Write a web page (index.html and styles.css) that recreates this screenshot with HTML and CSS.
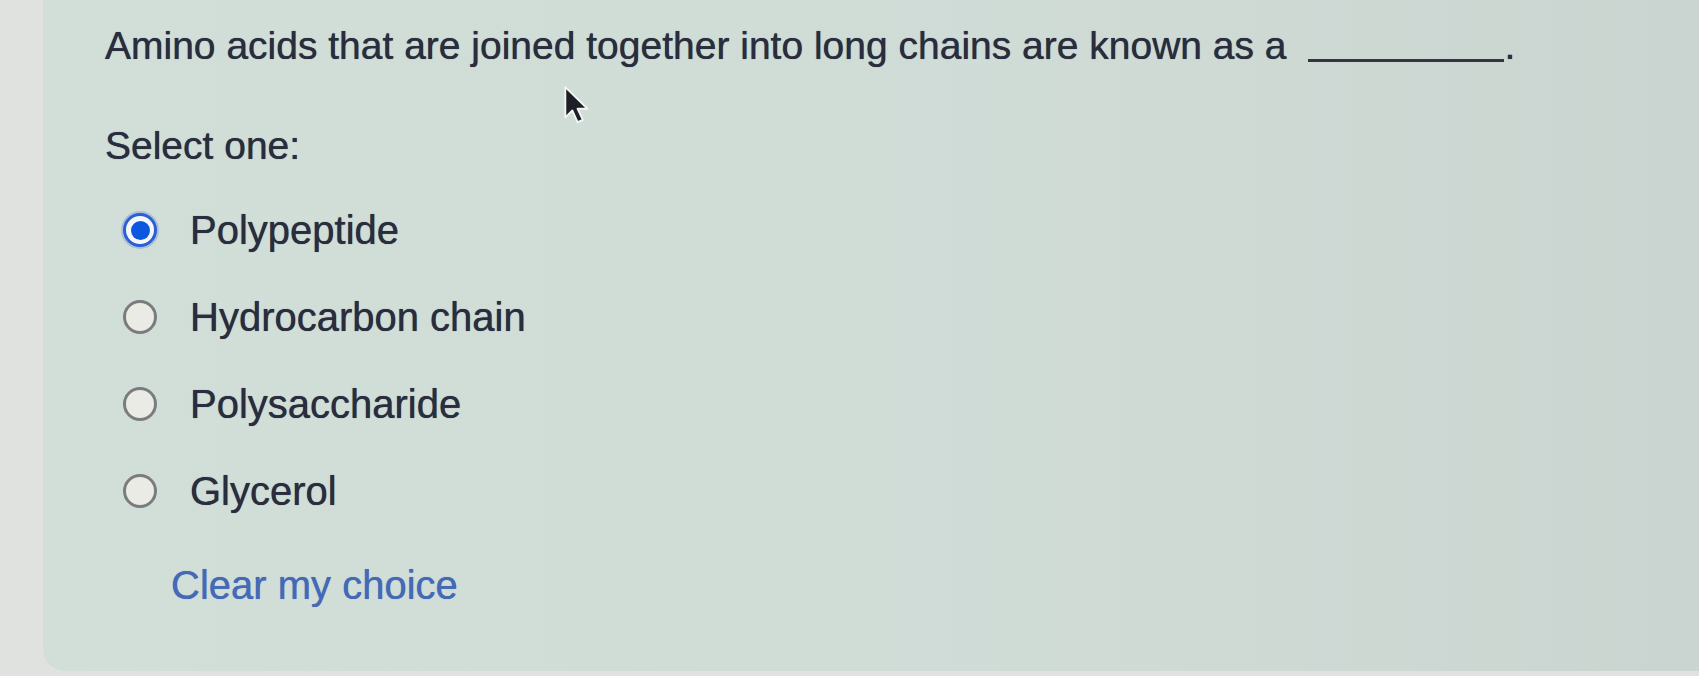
FILE: index.html
```html
<!DOCTYPE html>
<html>
<head>
<meta charset="utf-8">
<link rel="stylesheet" href="styles.css">
</head>
<body>
<div class="page">
  <div class="card">
    <p class="question">Amino acids that are joined together into long chains are known as a <span class="blank"></span>.</p>
    <p class="prompt">Select one:</p>
    <div class="options">
      <div class="option"><span class="radio checked"><span class="dot"></span></span><span class="label">Polypeptide</span></div>
      <div class="option"><span class="radio"></span><span class="label">Hydrocarbon chain</span></div>
      <div class="option"><span class="radio"></span><span class="label">Polysaccharide</span></div>
      <div class="option"><span class="radio"></span><span class="label">Glycerol</span></div>
    </div>
    <a class="clear" href="#">Clear my choice</a>
  </div>
  <svg class="cursor" width="30" height="42" viewBox="0 0 24 36">
    <path d="M2 1 L2 27 L8 21 L12.5 31 L17 29 L12.5 19.5 L21 19.5 Z" fill="#1e1f26" stroke="#f4f6f4" stroke-width="1.6" stroke-linejoin="round"/>
  </svg>
</div>
</body>
</html>
```
FILE: styles.css
```css
html, body {
  margin: 0;
  padding: 0;
}
body {
  background: #dfe2de;
  font-family: "Liberation Sans", Arial, sans-serif;
  color: #2a2d3d;
  width: 1699px;
  height: 676px;
  overflow: hidden;
}
.page {
  position: relative;
  height: 676px;
  padding-left: 43px;
}
.card {
  height: 671px;
  box-sizing: border-box;
  padding: 23px 0 0 62px;
  border-radius: 0 0 0 22px;
  background: linear-gradient(90deg, #d2ded8 0%, #d0ddd7 40%, #cfdad5 70%, #cad5d1 100%);
  text-shadow: 0 0 0.7px currentColor;
}
.question {
  margin: 0;
  font-size: 39px;
  line-height: 46px;
  white-space: nowrap;
}
.blank {
  display: inline-block;
  width: 196px;
  height: 2px;
  margin-left: 11px;
  border-bottom: 3px solid #34353f;
  vertical-align: -3px;
}
.prompt {
  margin: 54px 0 0;
  font-size: 39px;
  line-height: 46px;
}
.options {
  margin-top: 37px;
  display: flex;
  flex-direction: column;
  gap: 39px;
}
.option {
  display: flex;
  align-items: center;
  height: 48px;
  padding-left: 18px;
  font-size: 40px;
}
.radio {
  width: 34px;
  height: 34px;
  box-sizing: border-box;
  border-radius: 50%;
  border: 3px solid #7a7c80;
  background: #ebebe6;
  display: flex;
  align-items: center;
  justify-content: center;
  flex: none;
}
.radio.checked {
  border-color: #2b5fd4;
  background: #f4f6fb;
  box-shadow: 0 0 0 2px rgba(120, 150, 225, 0.45);
}
.dot {
  width: 19px;
  height: 19px;
  border-radius: 50%;
  background: #0c57e0;
}
.label {
  margin-left: 33px;
  line-height: 48px;
}
.clear {
  display: inline-block;
  margin: 46px 0 0 66px;
  font-size: 40px;
  line-height: 48px;
  color: #4569b6;
  text-decoration: none;
}
.cursor {
  position: absolute;
  left: 562px;
  top: 86px;
}
```
